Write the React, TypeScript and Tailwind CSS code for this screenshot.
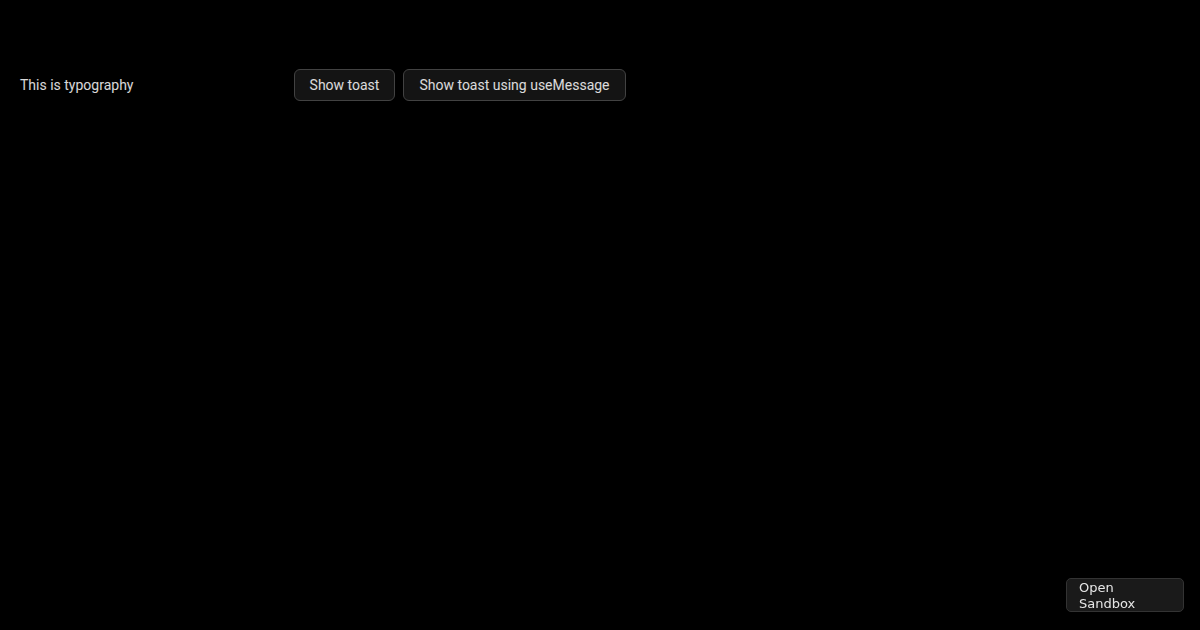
import React from 'react';

const App: React.FC = () => {
  return (
    <div className="min-h-[630px] bg-black" style={{ fontFamily: 'Roboto, "Liberation Sans", sans-serif' }}>
      <div className="flex items-center pt-[69px] pl-5">
        <span className="w-[274px] text-sm text-white/85">This is typography</span>
        <div className="flex gap-2">
          <button className="h-8 w-[101px] rounded-md border border-[#424242] bg-[#141414] text-sm text-white/85 shadow-[0_2px_0_rgba(0,0,0,0.02)]">
            Show toast
          </button>
          <button className="h-8 w-[223px] rounded-md border border-[#424242] bg-[#141414] text-sm text-white/85 shadow-[0_2px_0_rgba(0,0,0,0.02)]">
            Show toast using useMessage
          </button>
        </div>
      </div>

      {/* Sandbox link */}
      <button
        className="fixed right-4 bottom-[18px] flex h-[34px] w-[118px] flex-col items-start rounded-[5px] border border-[#333333] bg-[#1a1a1a] pl-3 pt-[1px] text-left text-[13px] leading-4 text-[#e6e6e6]"
        style={{ fontFamily: '"DejaVu Sans", sans-serif' }}
      >
        <span>Open</span>
        <span>Sandbox</span>
      </button>
    </div>
  );
};

export default App;
